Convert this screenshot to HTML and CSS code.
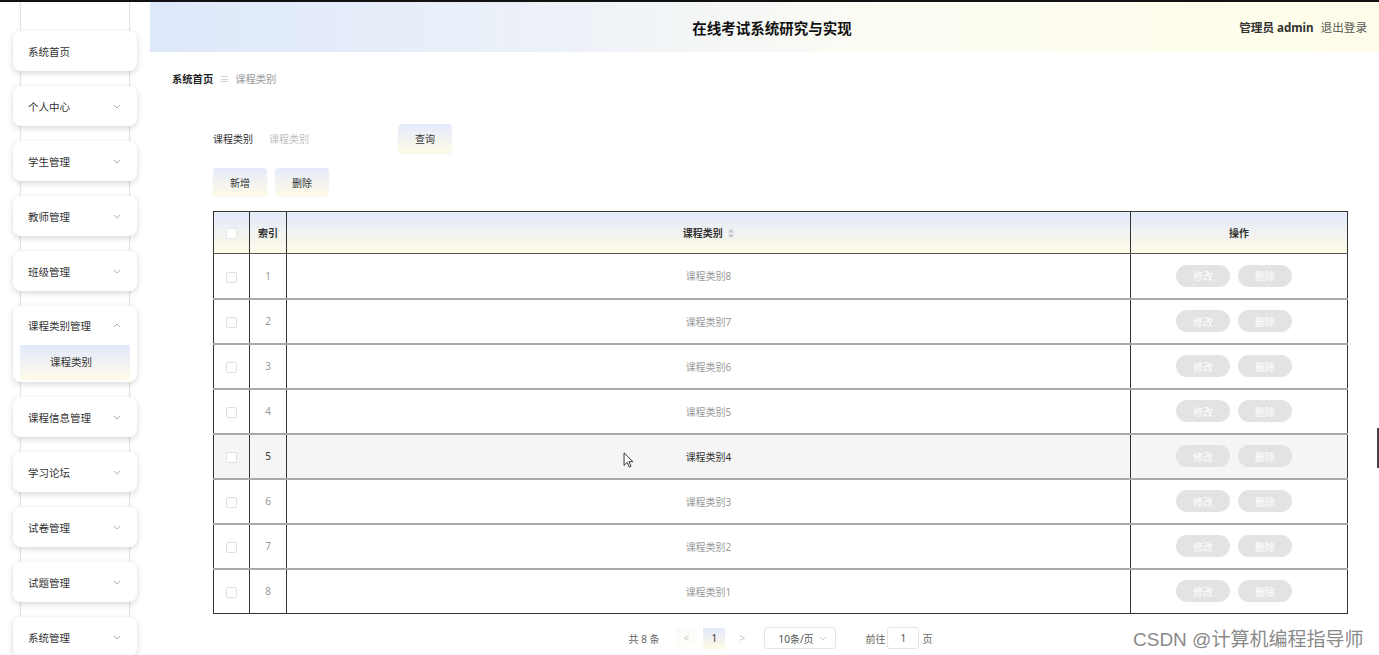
FILE: index.html
```html
<!DOCTYPE html>
<html lang="zh-CN">
<head>
<meta charset="utf-8">
<title>在线考试系统研究与实现</title>
<link rel="stylesheet" href="styles.css">
</head>
<body>
<div class="topline"></div>
<div class="frame">
  <aside class="sidebar">
    <div class="rail">
      <div class="card"><span>系统首页</span></div>
      <div class="card"><span>个人中心</span><svg class="chev" viewBox="0 0 8 5"><path d="M1 1l3 3 3-3"/></svg></div>
      <div class="card"><span>学生管理</span><svg class="chev" viewBox="0 0 8 5"><path d="M1 1l3 3 3-3"/></svg></div>
      <div class="card"><span>教师管理</span><svg class="chev" viewBox="0 0 8 5"><path d="M1 1l3 3 3-3"/></svg></div>
      <div class="card"><span>班级管理</span><svg class="chev" viewBox="0 0 8 5"><path d="M1 1l3 3 3-3"/></svg></div>
      <div class="card open">
        <div class="card-head"><span>课程类别管理</span><svg class="chev" viewBox="0 0 8 5"><path d="M1 4l3-3 3 3"/></svg></div>
        <div class="sub">课程类别</div>
      </div>
      <div class="card"><span>课程信息管理</span><svg class="chev" viewBox="0 0 8 5"><path d="M1 1l3 3 3-3"/></svg></div>
      <div class="card"><span>学习论坛</span><svg class="chev" viewBox="0 0 8 5"><path d="M1 1l3 3 3-3"/></svg></div>
      <div class="card"><span>试卷管理</span><svg class="chev" viewBox="0 0 8 5"><path d="M1 1l3 3 3-3"/></svg></div>
      <div class="card"><span>试题管理</span><svg class="chev" viewBox="0 0 8 5"><path d="M1 1l3 3 3-3"/></svg></div>
      <div class="card"><span>系统管理</span><svg class="chev" viewBox="0 0 8 5"><path d="M1 1l3 3 3-3"/></svg></div>
    </div>
  </aside>
  <div class="right">
    <header class="header">
      <div class="spacer"></div>
      <div class="title">在线考试系统研究与实现</div>
      <div class="user"><b>管理员 admin</b><span class="logout">退出登录</span></div>
    </header>
    <main class="main">
      <div class="crumb"><b>系统首页</b><span class="sep">≡</span><span class="cur">课程类别</span></div>
      <div class="search">
        <span class="label">课程类别</span>
        <span class="input">课程类别</span>
        <span class="btn">查询</span>
      </div>
      <div class="actions">
        <span class="btn">新增</span>
        <span class="btn">删除</span>
      </div>
      <table class="grid">
        <thead>
          <tr>
            <th class="c-check"><span class="box"></span></th>
            <th class="c-idx">索引</th>
            <th class="c-name">课程类别 <svg class="sort" viewBox="0 0 6 9"><path d="M3 0l3 3.5H0z" fill="#c0c4cc"/><path d="M3 9l3-3.5H0z" fill="#c0c4cc"/></svg></th>
            <th class="c-ops">操作</th>
          </tr>
        </thead>
        <tbody>
          <tr><td class="c-check"><span class="box"></span></td><td class="c-idx">1</td><td>课程类别8</td><td class="c-ops"><span class="pill">修改</span><span class="pill">删除</span></td></tr>
          <tr><td class="c-check"><span class="box"></span></td><td class="c-idx">2</td><td>课程类别7</td><td class="c-ops"><span class="pill">修改</span><span class="pill">删除</span></td></tr>
          <tr><td class="c-check"><span class="box"></span></td><td class="c-idx">3</td><td>课程类别6</td><td class="c-ops"><span class="pill">修改</span><span class="pill">删除</span></td></tr>
          <tr><td class="c-check"><span class="box"></span></td><td class="c-idx">4</td><td>课程类别5</td><td class="c-ops"><span class="pill">修改</span><span class="pill">删除</span></td></tr>
          <tr class="hover"><td class="c-check"><span class="box"></span></td><td class="c-idx">5</td><td>课程类别4</td><td class="c-ops"><span class="pill">修改</span><span class="pill">删除</span></td></tr>
          <tr><td class="c-check"><span class="box"></span></td><td class="c-idx">6</td><td>课程类别3</td><td class="c-ops"><span class="pill">修改</span><span class="pill">删除</span></td></tr>
          <tr><td class="c-check"><span class="box"></span></td><td class="c-idx">7</td><td>课程类别2</td><td class="c-ops"><span class="pill">修改</span><span class="pill">删除</span></td></tr>
          <tr><td class="c-check"><span class="box"></span></td><td class="c-idx">8</td><td>课程类别1</td><td class="c-ops"><span class="pill">修改</span><span class="pill">删除</span></td></tr>
        </tbody>
      </table>
      <div class="pager">
        <span class="total">共 8 条</span>
        <span class="pbtn prev">&lt;</span>
        <span class="pbtn num">1</span>
        <span class="pbtn next">&gt;</span>
        <span class="select"><span>10条/页</span><svg class="chev sel" viewBox="0 0 8 5"><path d="M1 1l3 3 3-3"/></svg></span>
        <span class="goto">前往</span>
        <span class="jump">1</span>
        <span class="page">页</span>
      </div>
    </main>
  </div>
</div>
<svg class="cursor" viewBox="0 0 12 18" width="11" height="16"><path d="M1 1v14l3.5-3.3 2.4 5.3 2-.9-2.4-5.2H11z" fill="#fff" stroke="#222" stroke-width="1"/></svg>
<div class="scrollmark"></div>
<div class="watermark">CSDN @计算机编程指导师</div>
</body>
</html>
```
FILE: styles.css
```css
* { box-sizing: border-box; }
html, body { margin: 0; padding: 0; }
body {
  width: 1379px;
  height: 655px;
  overflow: hidden;
  position: relative;
  background: #fff;
  font-family: "Noto Sans", "Noto Sans CJK SC", sans-serif;
  color: #333;
}
.topline { height: 2px; background: #111; }
.frame { display: flex; height: 653px; }

/* sidebar */
.sidebar { width: 150px; flex: none; background: #fff; }
.rail {
  margin: 0 20px;
  height: 100%;
  border-left: 1px solid #e4e4e4;
  border-right: 1px solid #e4e4e4;
  box-shadow: 0 0 3px rgba(0,0,0,0.06);
  padding-top: 29px;
  display: flex;
  flex-direction: column;
  gap: 15px;
}
.card {
  margin: 0 -8px;
  height: 40px;
  flex: none;
  background: #fff;
  border-radius: 8px;
  box-shadow: 0 2px 6px rgba(0,0,0,0.16);
  display: flex;
  align-items: center;
  justify-content: space-between;
  padding: 0 16px 0 15px;
  font-size: 10.5px;
  color: #333;
}
.card.open {
  height: 76px;
  display: block;
  padding: 0;
}
.card-head {
  height: 39px;
  display: flex;
  align-items: center;
  justify-content: space-between;
  padding: 0 16px 0 15px;
}
.sub {
  margin: 0 7px;
  height: 35px;
  line-height: 35px;
  padding-left: 30px;
  background: linear-gradient(180deg, #e2e9fb 0%, #fffbe8 100%);
  color: #333;
}
.chev { width: 8px; height: 5px; fill: none; stroke: #a8a8a8; stroke-width: 0.9; }

/* right */
.right { flex: 1; display: flex; flex-direction: column; min-width: 0; }
.header {
  height: 50px;
  flex: none;
  display: grid;
  grid-template-columns: 1fr auto 1fr;
  align-items: center;
  background: linear-gradient(90deg, #dde8fb 0%, #eef2f8 35%, #fdfdf4 60%, #fffde9 100%);
}
.title { font-size: 14.5px; font-weight: 700; color: #111; padding-left: 15px; }
.user { justify-self: end; padding-right: 12px; font-size: 11.6px; color: #333; display: flex; gap: 7px; align-items: center; }
.user b { font-weight: 700; }
.logout { color: #555; }

.main { padding: 20px 31px 0 63px; position: relative; }
.crumb { height: 14px; line-height: 14px; font-size: 10.3px; margin-left: -41px; display: flex; gap: 6px; align-items: center; }
.crumb b { color: #222; font-weight: 700; }
.crumb .sep { color: #ccc; font-size: 10px; }
.crumb .cur { color: #999; }

.search { margin-top: 38px; height: 29px; display: flex; align-items: center; font-size: 10px; }
.label { color: #333; width: 56px; }
.input { color: #c0c0c0; width: 129px; }
.btn {
  display: inline-flex;
  align-items: center;
  justify-content: center;
  width: 54px;
  height: 29px;
  border-radius: 4px;
  background: linear-gradient(180deg, #e4eafb 0%, #fffbe7 100%);
  box-shadow: 0 1px 2px rgba(0,0,0,0.05);
  font-size: 10px;
  color: #333;
}
.actions { margin-top: 15px; display: flex; gap: 8px; }
.actions .btn { height: 28px; }

.grid {
  margin-top: 15px;
  width: 1135px;
  border-collapse: collapse;
  border: 1px solid #333;
  font-size: 10px;
  table-layout: fixed;
}
.grid th {
  height: 42px;
  background: linear-gradient(180deg, #e3eafb 0%, #fffbe6 100%);
  color: #333;
  font-weight: 700;
  border-left: 1px solid #333;
  border-bottom: 1px solid #555;
  padding: 0;
}
.grid td {
  height: 45px;
  border-left: 1px solid #333;
  border-bottom: 2px solid #a9a9a9;
  text-align: center;
  color: #999;
  padding: 0;
}
.grid tr:last-child td { border-bottom: 1px solid #333; }
.grid .c-check { width: 36px; }
.grid .c-idx { width: 37px; }
.grid .c-ops { width: 217px; }
.grid tr.hover td { background: #f5f5f5; color: #333; }
.sort { width: 6px; height: 9px; vertical-align: -1px; margin-left: 3px; }
.box { display: inline-block; width: 11px; height: 11px; border: 1px solid #e0e0e0; border-radius: 2px; background: #fff; vertical-align: middle; }
th .box { border-color: #e8e8e8; }
.c-ops { white-space: nowrap; }
.pill {
  display: inline-flex;
  align-items: center;
  justify-content: center;
  width: 54px;
  height: 22px;
  border-radius: 11px;
  background: #e3e3e3;
  color: #fff;
  font-size: 10px;
  margin: 0 4px;
}
.c-ops .pill:first-child { margin-left: -6px; }

.pager {
  width: 1135px;
  margin-top: 13px;
  height: 22px;
  display: flex;
  justify-content: center;
  align-items: center;
  font-size: 10px;
  color: #666;
  white-space: nowrap;
}
.total { margin-right: 16px; }
.pbtn { width: 22px; height: 21px; display: inline-flex; align-items: center; justify-content: center; color: #c8c8c8; }
.prev { background: linear-gradient(180deg, #fafafa 0%, #fffef8 100%); }
.num { margin: 0 6px; background: linear-gradient(180deg, #e2e9fb 0%, #fffbe5 100%); color: #333; }
.select {
  margin-left: 11px;
  width: 72px;
  height: 22px;
  border: 1px solid #e4e4e4;
  border-radius: 3px;
  display: inline-flex;
  align-items: center;
  justify-content: space-between;
  padding: 0 8px 0 13px;
  color: #555;
  white-space: nowrap;
  flex: none;
}
.chev.sel { stroke: #c0c4cc; }
.goto { margin-left: 29px; margin-right: 2px; }
.jump { width: 32px; height: 22px; border: 1px solid #e4e4e4; border-radius: 3px; display: inline-flex; align-items: center; justify-content: center; color: #555; }
.page { margin-left: 3px; }

.cursor { position: absolute; left: 623px; top: 452px; }
.scrollmark { position: absolute; right: 0; top: 428px; width: 2px; height: 40px; background: #444; }
.watermark {
  position: absolute;
  left: 1133px;
  top: 624px;
  font-family: "Liberation Sans", "Noto Sans CJK SC", sans-serif;
  font-size: 19px;
  color: #8a8a8a;
  white-space: nowrap;
}
```
